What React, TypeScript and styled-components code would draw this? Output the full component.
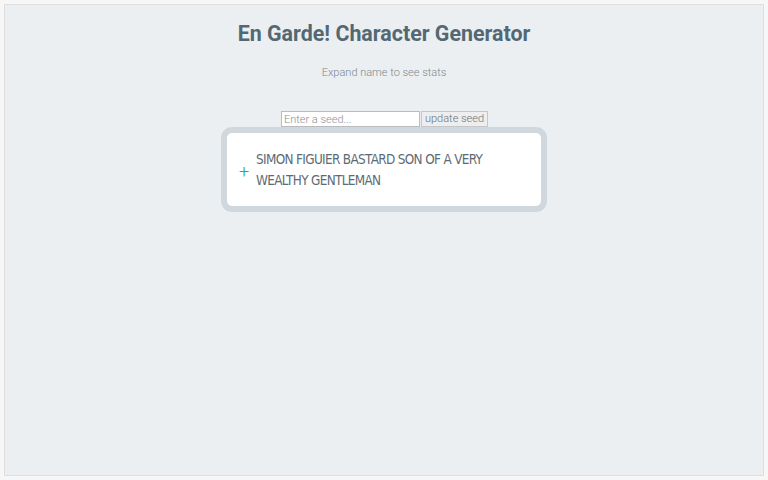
import React, { useState } from "react";
import styled, { createGlobalStyle } from "styled-components";

const GlobalStyle = createGlobalStyle`
  html, body {
    margin: 0;
    height: 100%;
    background: #f7f7f7;
  }
  body {
    padding: 4px;
    box-sizing: border-box;
    font-family: Roboto, "Liberation Sans", sans-serif;
  }
  #root {
    height: 100%;
  }
`;

function App() {
  const [seed, setSeed] = useState("");
  const [open, setOpen] = useState(false);

  return (
    <>
      <GlobalStyle />
      <PageStyled>
        <h1 className="title">En Garde! Character Generator</h1>
        <p className="hint">Expand name to see stats</p>
        <form className="seed" onSubmit={(e) => e.preventDefault()}>
          <input
            className="seed__input"
            placeholder="Enter a seed..."
            value={seed}
            onChange={(e) => setSeed(e.target.value)}
          />
          <button className="seed__button" type="submit">
            update seed
          </button>
        </form>
        <CardStyled>
          <div className="card__inner" onClick={() => setOpen(!open)}>
            <span className="card__toggle">{open ? "−" : "+"}</span>
            <span className="card__name">
              Simon Figuier bastard son of a very wealthy gentleman
            </span>
          </div>
        </CardStyled>
      </PageStyled>
    </>
  );
}

const PageStyled = styled.div`
  height: 100%;
  box-sizing: border-box;
  border: 1px solid #dedede;
  background: #ebeff2;
  display: flex;
  flex-direction: column;
  align-items: center;

  .title {
    margin: 16px 0 0;
    font-size: 21.4px;
    font-weight: 700;
    color: #536872;
    line-height: 26px;
  }

  .hint {
    margin: 19px 0 0;
    font-size: 11px;
    font-weight: 300;
    color: #7c878e;
    line-height: 14px;
  }

  .seed {
    display: flex;
    margin-top: 31px;
    padding-left: 1px;

    &__input {
      width: 139px;
      height: 16px;
      box-sizing: border-box;
      border: 1px solid #b9bdc0;
      background: #fff;
      padding: 0 2px;
      font-family: Roboto, "Liberation Sans", sans-serif;
      font-size: 11px;
      font-weight: 300;
      color: #555;
      outline: none;

      &::placeholder {
        color: #8a8f93;
      }
    }

    &__button {
      height: 16px;
      margin-left: 1px;
      box-sizing: border-box;
      border: 1px solid #c4c7c9;
      background: #eeeeee;
      padding: 0 3px;
      font-family: Roboto, "Liberation Sans", sans-serif;
      font-size: 11px;
      font-weight: 300;
      color: #6a7177;
      line-height: 14px;
    }
  }
`;

const CardStyled = styled.div`
  width: 326px;
  box-sizing: border-box;
  border: 6px solid #d0d8de;
  border-radius: 11px;
  background: #fff;

  .card__inner {
    display: flex;
    align-items: center;
    padding: 16px 14px 15px 12px;
    border-radius: 6px;
    cursor: pointer;
  }

  .card__toggle {
    width: 17px;
    flex-shrink: 0;
    color: #26a69a;
    font-size: 18px;
    font-weight: 300;
    line-height: 18px;
    margin-top: 3px;
  }

  .card__name {
    font-family: "DejaVu Sans Condensed", "Liberation Sans Narrow", sans-serif;
    text-transform: uppercase;
    font-size: 13.4px;
    line-height: 21px;
    color: #5d6b74;
    letter-spacing: -0.65px;
  }
`;

export default App;
